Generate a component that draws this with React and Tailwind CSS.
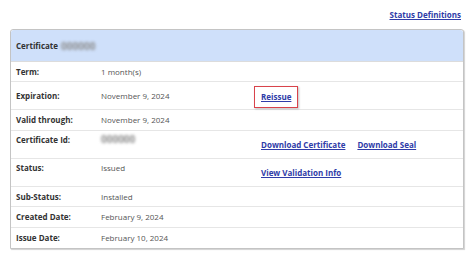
export default function App() {
    const link = "font-bold text-[#2f3ca8] underline underline-offset-[1px]";
    const label = "font-bold text-[#333]";
    const value = "text-[#555]";
    const blurred = "font-bold text-[10px] text-[#8c8c8c] blur-[1.8px] select-none";

    return (
        <div className="w-[474px] h-[272px] bg-white pt-[10px] pl-[10px] font-['Open_Sans',sans-serif] text-[8px] leading-[10px]">
            {/* Top link */}
            <div className="w-[453px] flex justify-end pr-[2px] h-[19px]">
                <span className={link}>Status Definitions</span>
            </div>

            {/* Certificate table */}
            <div className="w-[454px] border border-[#c4c4c4] rounded-t-[3px] shadow-[1px_1px_1px_rgba(0,0,0,0.18)] bg-white">
                {/* Header */}
                <div className="h-[32px] bg-[#cfe0fa] flex items-center pl-[5px] rounded-t-[3px] border-b border-[#dcdcdc]">
                    <span className={label}>Certificate</span>
                    <span className={`ml-[3px] ${blurred}`}>000000</span>
                </div>

                {/* Term */}
                <div className="grid grid-cols-[85px_160px_1fr] h-[20px] items-center pl-[5px] border-b border-[#e6e6e6]">
                    <span className={label}>Term:</span>
                    <span className={value}>1 month(s)</span>
                    <span />
                </div>

                {/* Expiration */}
                <div className="grid grid-cols-[85px_160px_1fr] h-[28px] items-center pl-[5px] border-b border-[#e6e6e6]">
                    <span className={label}>Expiration:</span>
                    <span className={value}>November 9, 2024</span>
                    <div className="flex">
                        <span className="-ml-[7px] mt-[2px] px-[6px] py-[5px] border border-[#d9434b] shadow-[1px_1px_2px_rgba(0,0,0,0.25)]">
                            <span className={link}>Reissue</span>
                        </span>
                    </div>
                </div>

                {/* Valid through */}
                <div className="grid grid-cols-[85px_160px_1fr] h-[21px] items-center pl-[5px] border-b border-[#e6e6e6]">
                    <span className={label}>Valid through:</span>
                    <span className={value}>November 9, 2024</span>
                    <span />
                </div>

                {/* Certificate Id */}
                <div className="grid grid-cols-[85px_160px_1fr] h-[28px] items-start pl-[5px] border-b border-[#e6e6e6]">
                    <span className={`${label} pt-[4px]`}>Certificate Id:</span>
                    <span className="pt-[3px]">
                        <span className={blurred}>000000</span>
                    </span>
                    <div className="flex gap-[12px] pt-[9px]">
                        <span className={link}>Download Certificate</span>
                        <span className={link}>Download Seal</span>
                    </div>
                </div>

                {/* Status */}
                <div className="grid grid-cols-[85px_160px_1fr] h-[28px] items-start pl-[5px] border-b border-[#e6e6e6]">
                    <span className={`${label} pt-[4px]`}>Status:</span>
                    <span className={`${value} pt-[4px]`}>Issued</span>
                    <div className="pt-[9px]">
                        <span className={link}>View Validation Info</span>
                    </div>
                </div>

                {/* Sub-Status */}
                <div className="grid grid-cols-[85px_160px_1fr] h-[20px] items-center pl-[5px] border-b border-[#e6e6e6]">
                    <span className={label}>Sub-Status:</span>
                    <span className={value}>Installed</span>
                    <span />
                </div>

                {/* Created Date */}
                <div className="grid grid-cols-[85px_160px_1fr] h-[21px] items-center pl-[5px] border-b border-[#e6e6e6]">
                    <span className={label}>Created Date:</span>
                    <span className={value}>February 9, 2024</span>
                    <span />
                </div>

                {/* Issue Date */}
                <div className="grid grid-cols-[85px_160px_1fr] h-[20px] items-center pl-[5px]">
                    <span className={label}>Issue Date:</span>
                    <span className={value}>February 10, 2024</span>
                    <span />
                </div>
            </div>
        </div>
    );
}
